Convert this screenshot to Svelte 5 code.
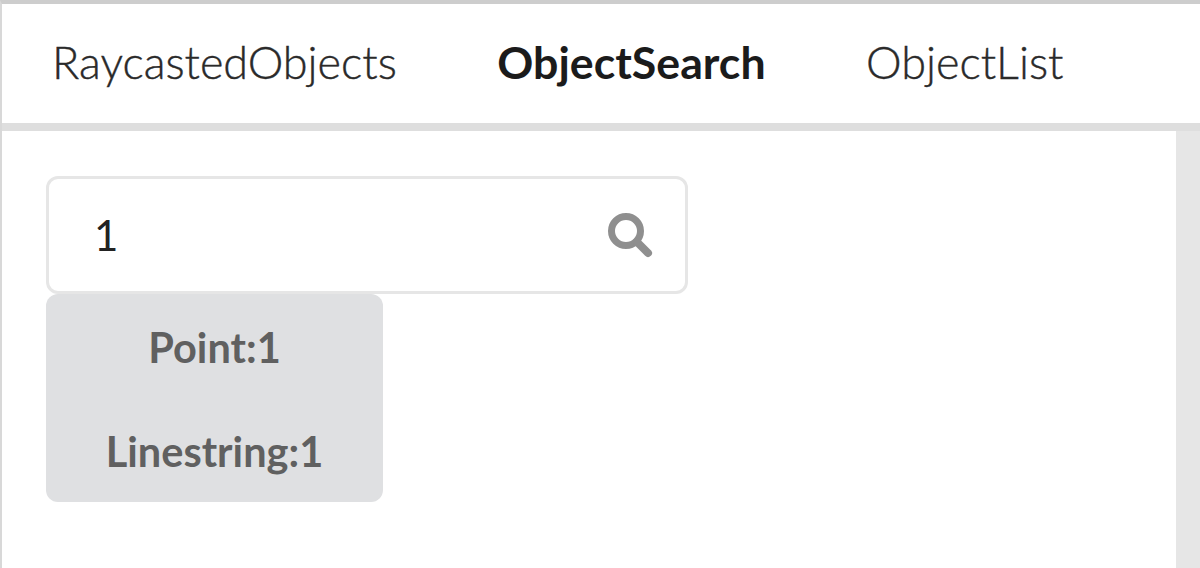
<script>
  const tabs = [
    { label: 'RaycastedObjects', active: false },
    { label: 'ObjectSearch', active: true },
    { label: 'ObjectList', active: false }
  ];
  const results = ['Point:1', 'Linestring:1'];
</script>

<div class="page">
  <nav class="tabs">
    {#each tabs as tab}
      <span class="tab" class:active={tab.active}>{tab.label}</span>
    {/each}
  </nav>
  <div class="body">
    <main class="content">
      <div class="search">
        <span class="value">1</span>
        <svg class="icon" viewBox="0 0 48 48" width="48" height="48" aria-hidden="true">
          <circle cx="20" cy="20" r="14.5" fill="none" stroke="#8f8f8f" stroke-width="7" />
          <path d="M31 31 L42 42" fill="none" stroke="#8f8f8f" stroke-width="8" stroke-linecap="round" />
        </svg>
      </div>
      <ul class="results">
        {#each results as r}
          <li>{r}</li>
        {/each}
      </ul>
    </main>
    <div class="scrollbar"></div>
  </div>
</div>

<style>
  :global(body) {
    margin: 0;
    background: #fff;
  }
  .page {
    height: 568px;
    box-sizing: border-box;
    border-top: 4px solid #cdcdcd;
    border-left: 2px solid #d8d8d8;
    display: flex;
    flex-direction: column;
    font-family: Lato, "Noto Sans", sans-serif;
    overflow: hidden;
  }
  .tabs {
    flex: none;
    display: flex;
    align-items: center;
    gap: 100.5px;
    padding: 0 0 0 50px;
    box-sizing: border-box;
    border-bottom: 8px solid #dedede;
    height: 127px;
    font-size: 45px;
    color: #2a2a2a;
  }
  .tab {
    font-weight: 300;
    -webkit-text-stroke: 0.4px #2a2a2a;
    position: relative;
    top: -2px;
  }
  .tab.active {
    font-weight: 700;
    font-size: 44.7px;
    color: #1b1b1b;
    -webkit-text-stroke: 0;
  }
  .body {
    flex: 1;
    display: flex;
    min-height: 0;
  }
  .content {
    flex: 1;
    padding: 45px 0 0 44px;
  }
  .scrollbar {
    width: 24px;
    flex: none;
    background: #e6e6e6;
  }
  .search {
    width: 642px;
    height: 118px;
    box-sizing: border-box;
    border: 3px solid #e6e6e6;
    border-radius: 12px;
    display: flex;
    align-items: center;
    justify-content: space-between;
    padding: 0 31px 0 45px;
  }
  .value {
    font-size: 42px;
    color: #222;
  }
  .icon {
    display: block;
  }
  .results {
    list-style: none;
    margin: 0;
    padding: 0;
    width: 337px;
    height: 208px;
    background: #dfe0e2;
    border-radius: 12px;
    display: flex;
    flex-direction: column;
    font-size: 41.5px;
    font-weight: 700;
    color: #606060;
  }
  .results li {
    height: 104px;
    padding-top: 2px;
    box-sizing: border-box;
    display: flex;
    align-items: center;
    justify-content: center;
  }
</style>
